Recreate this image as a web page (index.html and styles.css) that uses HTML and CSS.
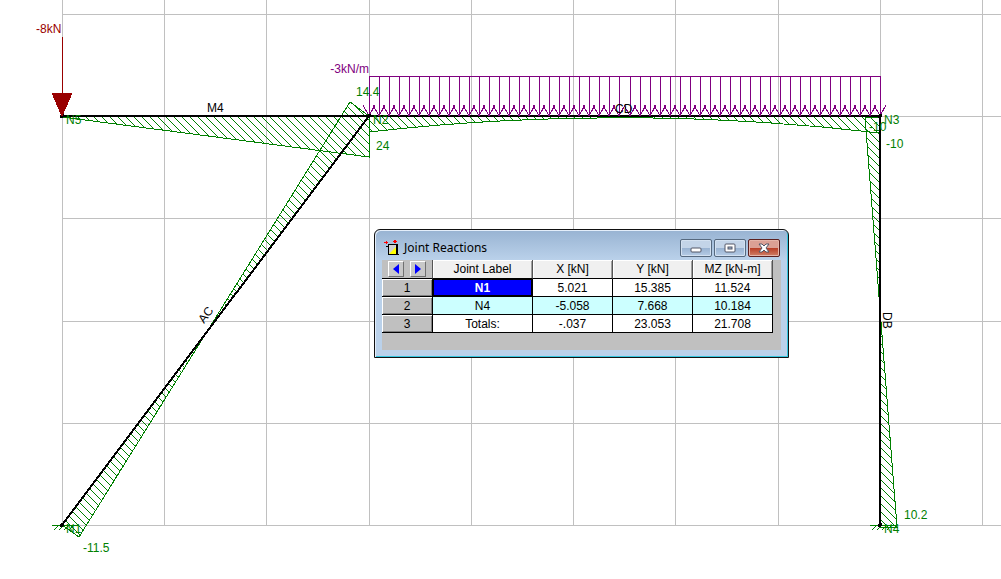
FILE: index.html
```html
<!DOCTYPE html>
<html lang="en">
<head>
<meta charset="utf-8">
<title>Joint Reactions</title>
<link rel="stylesheet" href="styles.css">
</head>
<body>
<main class="workspace">
  <svg class="model" role="img" aria-label="Frame model with moment diagram">
    <defs>
      <pattern id="hatch" width="8" height="8" patternUnits="userSpaceOnUse">
        <path class="hatch-dots" d="M1 0h1v1h-1zM2 1h1v1h-1zM3 2h1v1h-1zM4 3h1v1h-1zM5 4h1v1h-1zM6 5h1v1h-1zM7 6h1v1h-1zM0 7h1v1h-1z"/>
      </pattern>
    </defs>

    <g class="grid">
      <path d="M62 0V525M164 0V525M266 0V525M369 0V525M471 0V525M573 0V525M675 0V525M778 0V525M880 0V525M982 0V525"/>
      <line x1="62" y1="14" x2="100%" y2="14"/>
      <line x1="62" y1="116" x2="100%" y2="116"/>
      <line x1="62" y1="218" x2="100%" y2="218"/>
      <line x1="62" y1="321" x2="100%" y2="321"/>
      <line x1="62" y1="423" x2="100%" y2="423"/>
      <line x1="62" y1="525" x2="100%" y2="525"/>
    </g>

    <g class="moments">
      <path d="M62 117L369 157V117"/>
      <path d="M369 117V132Q622 103 880 133V117"/>
      <path d="M62 525L79 537L350 102L369 116"/>
      <path d="M880 117H865L897 527H880"/>
    </g>

    <g class="members">
      <path d="M62 116H880V525"/>
      <path d="M62 525L369 116"/>
    </g>

    <g class="supports">
      <path d="M52 525H78M58 526L54 530M63 526L59 530M68 526L64 530M73 526L69 530"/>
      <path d="M870 525H897M876 526L872 530M881 526L877 530M886 526L882 530M891 526L887 530"/>
    </g>

    <path class="load" id="distributed-load"/>

    <g class="joints">
      <circle cx="62" cy="116" r="2"/><circle cx="369" cy="116" r="2"/><circle cx="880" cy="116" r="2"/>
      <circle cx="62" cy="525" r="2"/><circle cx="880" cy="525" r="2"/>
    </g>

    <g class="point-load">
      <path d="M62 37V95"/>
      <path class="head" d="M52 93H72L62 116z"/>
    </g>

    <g class="labels">
      <text class="red" x="36" y="33">-8kN</text>
      <text class="purple" x="369" y="73" text-anchor="end">-3kN/m</text>
      <text class="black" x="207" y="112">M4</text>
      <text class="black" x="615" y="113">CD</text>
      <text class="black" transform="translate(883 312) rotate(90)">DB</text>
      <text class="black" transform="translate(204 324) rotate(-53)">AC</text>
      <text x="66" y="124">N5</text>
      <text x="373" y="124">N2</text>
      <text x="884" y="124">N3</text>
      <text x="66" y="533">N1</text>
      <text x="884" y="533">N4</text>
      <text x="356" y="96">14.4</text>
      <text x="376" y="150">24</text>
      <text x="869" y="131">-10</text>
      <text x="886" y="148">-10</text>
      <text x="83" y="552">-11.5</text>
      <text x="904" y="519">10.2</text>
    </g>
  </svg>

  <section class="window" aria-labelledby="window-title">
    <header class="titlebar">
      <svg class="app-icon" width="16" height="16" viewBox="0 0 16 16" aria-hidden="true">
        <path d="M5 5h7v9h-7z" fill="#d0d0d0"/>
        <path d="M12 7v7H5z" fill="#ff0"/>
        <path d="M4 4h1v11h-1zM4 4h8v1h-8zM12 4h2v11h-2zM4 14h11v1h-11zM2 6h2v1h-2z"/>
        <path d="M0 2h2v-1h1v1h1v1h-1v1h-1v-1H0zM10 0h2v1h1v1h-1v1h-2v-1h-1v-1h1z" fill="#f00"/>
      </svg>
      <h1 class="title" id="window-title">Joint Reactions</h1>
      <div class="controls">
        <button class="control" type="button" aria-label="Minimize">
          <svg width="12" height="12" viewBox="0 0 12 12"><rect x="1" y="6" width="10" height="4" rx="1" fill="#fff" stroke="#535666"/></svg>
        </button>
        <button class="control" type="button" aria-label="Restore">
          <svg width="12" height="12" viewBox="0 0 12 12"><rect x="1" y="2" width="10" height="8" rx="1" fill="#fff" stroke="#535666"/><rect x="4" y="5" width="4" height="2" fill="#9fb9d8" stroke="#535666"/></svg>
        </button>
        <button class="control close" type="button" aria-label="Close">
          <svg width="12" height="12" viewBox="0 0 12 12"><path d="M1 2h3l2 2 2-2h3L8 6l3 4H8L6 8l-2 2H1l3-4z" fill="#fff" stroke="#535666"/></svg>
        </button>
      </div>
    </header>
    <div class="content">
      <table class="sheet">
        <thead>
          <tr>
            <th class="nav-cell">
              <div class="nav">
                <button class="nav-button" type="button" aria-label="Previous"><svg width="6" height="10" viewBox="0 0 6 10"><path d="M6 0v10L0 5z"/></svg></button>
                <button class="nav-button" type="button" aria-label="Next"><svg width="6" height="10" viewBox="0 0 6 10"><path d="M0 0v10l6-5z"/></svg></button>
              </div>
            </th>
            <th class="wide" scope="col">Joint Label</th>
            <th scope="col">X [kN]</th>
            <th scope="col">Y [kN]</th>
            <th scope="col">MZ [kN-m]</th>
          </tr>
        </thead>
        <tbody>
          <tr><th scope="row">1</th><td class="selected">N1</td><td>5.021</td><td>15.385</td><td>11.524</td></tr>
          <tr class="alt"><th scope="row">2</th><td>N4</td><td>-5.058</td><td>7.668</td><td>10.184</td></tr>
          <tr><th scope="row">3</th><td>Totals:</td><td>-.037</td><td>23.053</td><td>21.708</td></tr>
        </tbody>
      </table>
    </div>
  </section>
</main>
<script src="load.js"></script>
</body>
</html>
```
FILE: styles.css
```css
* {
  box-sizing: border-box;
}

body {
  margin: 0;
  background: #fff;
  font-family: "Liberation Sans", Arial, sans-serif;
  font-size: 12px;
}

.workspace {
  position: relative;
  height: 100vh;
  overflow: hidden;
}

/* Model drawing */
.model {
  display: block;
  width: 100%;
  height: 100%;
  shape-rendering: crispEdges;
}

.grid {
  stroke: #c0c0c0;
}

.members {
  fill: none;
  stroke: #000;
  stroke-width: 2;
}

.hatch-dots {
  fill: #008000;
  stroke: none;
}

.moments {
  fill: url(#hatch);
  stroke: #008000;
}

.supports {
  fill: none;
  stroke: #008000;
}

.load {
  fill: none;
  stroke: #800080;
}

.point-load {
  stroke: #900;
}

.point-load .head {
  fill: #900;
}

.labels {
  fill: #008000;
}

.labels .red {
  fill: #900;
}

.labels .purple {
  fill: #800080;
}

.labels .black {
  fill: #000;
}

/* Floating results window */
.window {
  position: absolute;
  left: 374px;
  top: 229px;
  width: 415px;
  padding: 0 7px 7px;
  border: 1px solid #111;
  border-radius: 6px 6px 0 0;
  background: linear-gradient(#98b3d2, #bad1ea 30px);
  box-shadow: inset 1px 1px #e4eefa, inset -1px -1px #35c5de;
}

.titlebar {
  display: flex;
  align-items: center;
  gap: 4px;
  height: 30px;
  padding: 6px 1px 0 2px;
}

.title {
  flex: 1;
  margin: 0;
  font: 400 12px/16px "Noto Sans", sans-serif;
}

.controls {
  display: flex;
  gap: 2px;
}

.control {
  display: flex;
  align-items: center;
  justify-content: center;
  width: 32px;
  height: 18px;
  padding: 0;
  border: 1px solid #56697f;
  border-radius: 2px;
  background: linear-gradient(#c3d4e8 50%, #98b2d1 50%, #b6cce6);
  box-shadow: inset 0 0 0 1px #d3e1f1;
}

.control.close {
  border-color: #5b2020;
  background: linear-gradient(#dba095 50%, #b83c25 50%, #d08068);
  box-shadow: inset 0 0 0 1px #e5b5aa;
}

.content {
  padding-bottom: 17px;
  background: #c0c0c0;
}

.sheet {
  border-collapse: separate;
  border-spacing: 0;
  table-layout: fixed;
  width: 391px;
}

.sheet th,
.sheet td {
  width: 80px;
  height: 18px;
  padding: 0;
  border: solid #000;
  border-width: 0 1px 1px 0;
  background: #fff;
  font-weight: 400;
  line-height: 16px;
  text-align: center;
}

.sheet thead th {
  height: 19px;
  border-right-color: #555;
  background: #f0f0f0;
  box-shadow: inset 1px 1px #fff, inset -1px 0 #a0a0a0;
}

.sheet thead .nav-cell {
  width: 51px;
  background: #c0c0c0;
  box-shadow: none;
}

.sheet thead .wide {
  width: 100px;
}

.sheet tbody th {
  background: #c0c0c0;
  box-shadow: inset 1px 1px #fff, inset -1px -1px #808080;
}

.sheet tbody .alt td {
  background: #cff;
}

.sheet tbody .selected {
  background: #00f;
  box-shadow: inset 0 0 0 1px #000;
  color: #fff;
  font-weight: 700;
}

.nav {
  display: flex;
  justify-content: center;
  gap: 6px;
}

.nav-button {
  display: flex;
  align-items: center;
  justify-content: center;
  width: 16px;
  height: 16px;
  padding: 0;
  border: 1px solid;
  border-color: #fff #707070 #707070 #fff;
  background: #c8c8c8;
  fill: #00f;
}
```
FILE: load.js
```javascript
// Distributed load: evenly spaced arrows between joints N2 and N3.
const first = 369;
const last = 880;
const tail = 76;
const tip = 116;
const count = 51;

let outline = `M${first} ${tail}H${last}`;
for (let i = 0; i <= count; i++) {
  const x = Math.round(first + (last - first) * i / count);
  outline += `M${x} ${tail}V${tip}M${x - 6} 105L${x} ${tip}L${x + 6} 105`;
}
document.getElementById('distributed-load').setAttribute('d', outline);
```
